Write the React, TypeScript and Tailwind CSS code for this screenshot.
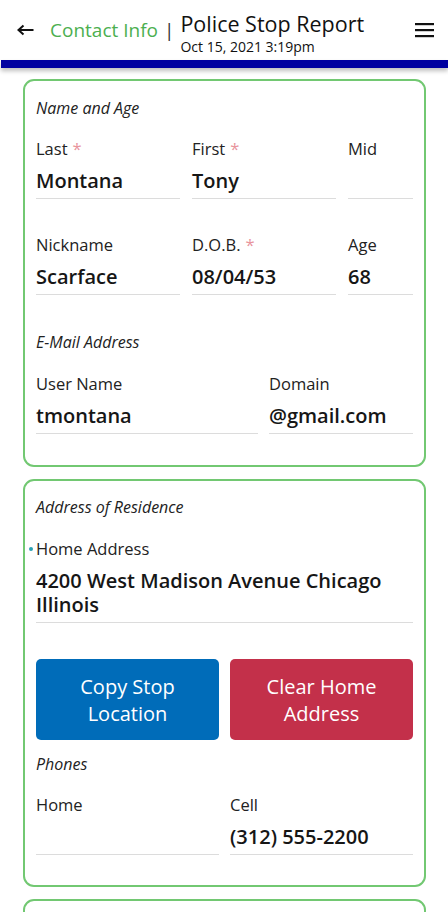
import React from "react";

const F = { fontFamily: '"Open Sans", "Noto Sans", sans-serif' };

function Field({ label, value, req, cls = "" }: { label: string; value?: string; req?: boolean; cls?: string }) {
  return (
    <div className={cls}>
      <div className="relative text-[16.5px] leading-[24px] text-[#222]">
        {label}
        {req && <span className="text-[#e8949c] ml-[5px]">*</span>}
      </div>
      <div className="mt-[6px] h-[32px] border-b border-[#dcdcdc] text-[20px] leading-[28px] font-semibold text-[#161616] whitespace-nowrap">
        {value}
      </div>
    </div>
  );
}

export default function App() {
  return (
    <div style={F} className="w-[448px] h-[912px] overflow-hidden bg-white">
      <div className="h-[60px] flex items-center">
        <svg className="ml-[17px]" width="17" height="12" viewBox="0 0 17 12">
          <path d="M16.5 6H2.5M6.5 1.5L1.5 6L6.5 10.5" stroke="#111" strokeWidth="2" fill="none" />
        </svg>
        <span className="ml-[16px] text-[19px] text-[#4caf50]">Contact Info</span>
        <span className="ml-[6px] text-[19px] text-[#333]">|</span>
        <div className="ml-[6px] flex flex-col pt-[4px]">
          <span className="text-[21.5px] leading-[29px] text-[#111]">Police Stop Report</span>
          <span className="text-[14px] leading-[17px] text-[#111]">Oct 15, 2021 3:19pm</span>
        </div>
        <svg className="ml-auto mr-[14px]" width="19" height="16" viewBox="0 0 19 16">
          <rect x="0" y="1" width="19" height="2.2" fill="#111" />
          <rect x="0" y="7" width="19" height="2.2" fill="#111" />
          <rect x="0" y="13" width="19" height="2.2" fill="#111" />
        </svg>
      </div>
      <div className="ml-[1px] h-[8px] bg-[#0000a0] shadow-[0_3px_4px_rgba(0,0,0,0.25)]" />
      <div className="pl-[23px] pr-[22px] pt-[11px] flex flex-col gap-[12px]">
        <div className="border-2 border-[#72c872] rounded-[11px] px-[11px] pt-[15px] pb-[31px]">
          <div className="italic text-[16px] leading-[24px] text-[#222]">Name and Age</div>
          <div className="mt-[17px] flex gap-[12px]">
            <Field cls="w-[144px]" label="Last" req value="Montana" />
            <Field cls="w-[144px]" label="First" req value="Tony" />
            <Field cls="flex-1" label="Mid" />
          </div>
          <div className="mt-[34px] flex gap-[12px]">
            <Field cls="w-[144px]" label="Nickname" value="Scarface" />
            <Field cls="w-[144px]" label="D.O.B." req value="08/04/53" />
            <Field cls="flex-1" label="Age" value="68" />
          </div>
          <div className="mt-[35px] italic text-[16px] leading-[24px] text-[#222]">E-Mail Address</div>
          <div className="mt-[18px] flex gap-[11px]">
            <Field cls="w-[222px]" label="User Name" value="tmontana" />
            <Field cls="flex-1" label="Domain" value="@gmail.com" />
          </div>
        </div>
        <div className="border-2 border-[#72c872] rounded-[11px] px-[11px] pt-[14px] pb-[30px]">
          <div className="italic text-[16px] leading-[24px] text-[#222]">Address of Residence</div>
          <div className="mt-[18px]">
            <div className="relative text-[16.5px] leading-[24px] text-[#222]">
              <span className="absolute left-[-7px] top-[10px] w-[4px] h-[4px] rounded-full bg-[#2aa1b3]" />
              Home Address
            </div>
            <div className="mt-[8px] pb-[5px] border-b border-[#dcdcdc] text-[20px] leading-[24px] font-semibold text-[#161616]">
              4200 West Madison Avenue Chicago Illinois
            </div>
          </div>
          <div className="mt-[36px] flex gap-[11px]">
            <button className="flex-1 h-[81px] rounded-[5px] bg-[#006cb9] text-white text-[20px] leading-[27px]">Copy Stop<br />Location</button>
            <button className="flex-1 h-[81px] rounded-[5px] bg-[#c3304a] text-white text-[20px] leading-[27px]">Clear Home<br />Address</button>
          </div>
          <div className="mt-[12px] italic text-[16px] leading-[24px] text-[#222]">Phones</div>
          <div className="mt-[17px] flex gap-[11px]">
            <Field cls="flex-1" label="Home" />
            <Field cls="flex-1" label="Cell" value="(312) 555-2200" />
          </div>
        </div>
        <div className="border-2 border-[#72c872] rounded-[11px] h-[60px]" />
      </div>
    </div>
  );
}
